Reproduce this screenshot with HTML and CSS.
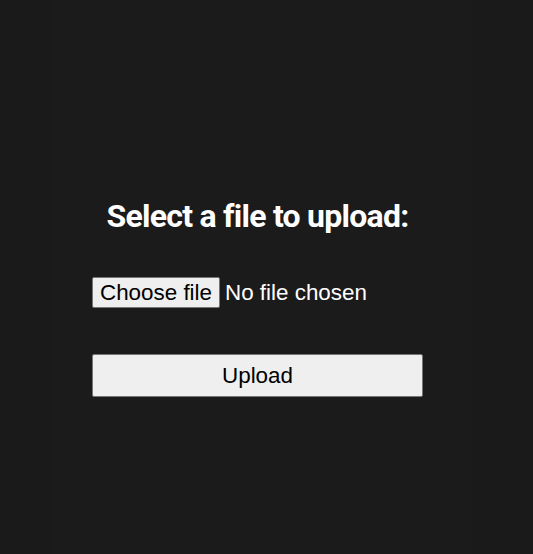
FILE: index.html
```html
<!DOCTYPE html>
<html>
<head>
<meta charset="utf-8">
<link rel="stylesheet" href="styles.css">
</head>
<body>
<main class="panel">
  <form class="upload-form">
    <h1 class="title">Select a file to upload:</h1>
    <label class="file-row">
      <input class="file-input" type="file" name="file">
      <span class="file-btn">Choose file</span>
      <span class="file-name">No file chosen</span>
    </label>
    <button class="upload-btn" type="submit">Upload</button>
  </form>
</main>
</body>
</html>
```
FILE: styles.css
```css
html, body {
  margin: 0;
  padding: 0;
  background: #1a1a1a;
}
.panel {
  width: 415px;
  margin-left: 50px;
  min-height: 554px;
  background: #1b1b1b;
  box-sizing: border-box;
  padding-top: 196px;
  padding-left: 42px;
}
.upload-form {
  width: 331px;
  display: flex;
  flex-direction: column;
  align-items: flex-start;
}
.title {
  align-self: center;
  margin: 0;
  color: #ffffff;
  font-family: Roboto, "Liberation Sans", sans-serif;
  font-weight: bold;
  font-size: 32px;
  line-height: 40px;
  letter-spacing: -0.75px;
  white-space: nowrap;
}
.file-row {
  margin-top: 41px;
  display: flex;
  align-items: center;
  font-family: "Liberation Sans", Arial, sans-serif;
  font-size: 22.4px;
  cursor: pointer;
}
.file-input {
  display: none;
}
.file-btn {
  box-sizing: border-box;
  height: 31px;
  line-height: 27px;
  padding: 1px 7px;
  border: 1px solid #767676;
  border-radius: 2px;
  background: #efefef;
  color: #000;
}
.file-name {
  margin-left: 5px;
  color: #ffffff;
}
.upload-btn {
  margin-top: 46px;
  width: 331px;
  height: 43px;
  padding: 1px 6px;
  border: 1px solid #767676;
  border-radius: 2px;
  background: #efefef;
  font-family: "Liberation Sans", Arial, sans-serif;
  font-size: 22.4px;
  color: #000;
}
```
